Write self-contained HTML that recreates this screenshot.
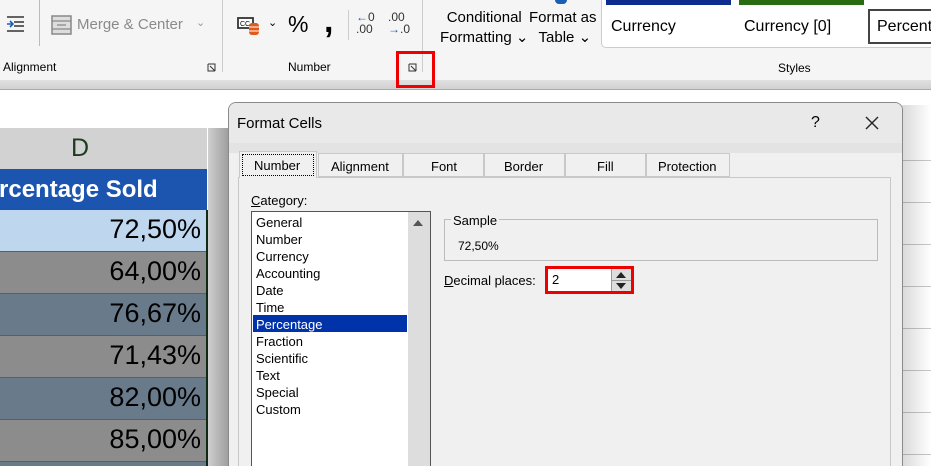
<!DOCTYPE html>
<html><head><style>
*{margin:0;padding:0;box-sizing:border-box}
html,body{width:931px;height:466px;overflow:hidden}
body{position:relative;background:#fff;font-family:"Liberation Sans",sans-serif;font-size:13px;color:#000}
.a{position:absolute}
.t{position:absolute;white-space:nowrap}
</style></head><body>
<!-- ribbon -->
<div class="a" style="left:0;top:0;width:931px;height:81px;background:#f5f5f5"></div>
<div class="a" style="left:0;top:80px;width:931px;height:10px;background:linear-gradient(#e0e0e0,#cfcfcf)"></div>
<div class="a" style="left:0;top:89px;width:931px;height:1px;background:#aaa"></div>
<div class="a" style="left:39px;top:0;width:1px;height:46px;background:#bbb"></div>
<div class="a" style="left:222px;top:0;width:1px;height:72px;background:#ccc"></div>
<div class="a" style="left:348px;top:10px;width:1px;height:30px;background:#ccc"></div>
<div class="a" style="left:422px;top:0;width:1px;height:72px;background:#ccc"></div>
<svg class="a" style="left:6px;top:15px" width="20" height="20"><path d="M1 2h17M8 7h10M8 11h10M1 16h17" stroke="#333" stroke-width="1.5"/><path d="M1 9h5M4 6l3 3-3 3" stroke="#1a5fb4" stroke-width="1.6" fill="none"/></svg>
<svg class="a" style="left:51px;top:15px" width="21" height="20"><rect x="1" y="1" width="19" height="18" fill="#ddd" stroke="#888" stroke-width="1.5"/><path d="M1 6h19M1 14h19M6 10h9" stroke="#888" stroke-width="1.3"/></svg>
<div class="t" style="left:77px;top:16px;font-size:15px;color:#8a8a8a">Merge &amp; Center</div>
<div class="t" style="left:196px;top:16px;font-size:11px;color:#999">&#8964;</div>
<svg class="a" style="left:237px;top:15px" width="24" height="22"><rect x="1" y="3" width="15" height="10" fill="#fff" stroke="#333" stroke-width="1.8"/><text x="3" y="11" font-size="7" font-family="Liberation Sans">CC</text><rect x="12" y="8" width="10" height="12" rx="3" fill="#e05a1a"/><path d="M12 12h10M12 16h10" stroke="#fff"/></svg>
<div class="t" style="left:268px;top:16px;font-size:11px">&#8964;</div>
<div class="t" style="left:288px;top:11px;font-size:23px">%</div>
<div class="t" style="left:324px;top:2px;font-size:34px;font-weight:bold">,</div>
<div class="t" style="left:356px;top:11px;font-size:12px;line-height:12px;color:#1a5fb4">&#8592;<span style="color:#333">0</span><br><span style="color:#333">.00</span></div>
<div class="t" style="left:388px;top:11px;font-size:12px;line-height:12px;color:#333">.00<br><span style="color:#1a5fb4">&#8594;</span>.0</div>
<div class="t" style="left:3px;top:60px;font-size:12px">Alignment</div>
<div class="t" style="left:288px;top:60px;font-size:12px">Number</div>
<div class="t" style="left:778px;top:61px;font-size:12px">Styles</div>
<svg class="a" style="left:207px;top:63px" width="10" height="10"><path d="M1 1h7v7M1 1v7h7M3 3l5 5" stroke="#333" fill="none"/></svg>
<svg class="a" style="left:408px;top:63px" width="10" height="10"><path d="M1 1h7v7M1 1v7h7M3 3l5 5" stroke="#333" fill="none"/></svg>
<div class="a" style="left:396px;top:51px;width:39px;height:37px;border:3px solid #e00"></div>
<div class="t" style="left:440px;top:8px;font-size:15px;text-align:center;line-height:20px">Conditional<br>Formatting &#8964;</div>
<div class="t" style="left:529px;top:8px;font-size:15px;text-align:center;line-height:20px">Format as<br>&nbsp;Table &#8964;</div>
<div class="a" style="left:555px;top:0;width:12px;height:4px;border-radius:0 0 6px 6px;background:#1a5fb4"></div>
<div class="a" style="left:601px;top:-5px;width:340px;height:53px;border:1px solid #ccc;border-radius:5px;background:#fff"></div>
<div class="a" style="left:606px;top:0;width:125px;height:5px;background:#0e2d8f"></div>
<div class="a" style="left:739px;top:0;width:125px;height:5px;background:#2a6c12"></div>
<div class="t" style="left:611px;top:18px;font-size:16px">Currency</div>
<div class="t" style="left:744px;top:18px;font-size:16px">Currency [0]</div>
<div class="a" style="left:868px;top:9px;width:70px;height:35px;border:2px solid #444;background:#fff"></div>
<div class="t" style="left:877px;top:18px;font-size:16px">Percent</div>
<!-- sheet -->
<div class="a" style="left:0;top:128px;width:207px;height:42px;background:#d2d2d2"></div>
<div class="t" style="left:71px;top:134px;font-size:25px;color:#1c3d1c">D</div>
<div class="a" style="left:0;top:169px;width:207px;height:41px;background:#1b55b0"></div>
<div class="t" style="left:-1px;top:176px;font-size:24px;font-weight:bold;color:#fff">rcentage Sold</div>
<div class="a" style="left:0;top:210px;width:207px;height:42px;background:#bed7ef;border-bottom:1px solid #55606a"></div>
<div class="a" style="left:0;top:252px;width:207px;height:42px;background:#8c8c8c;border-bottom:1px solid #55606a"></div>
<div class="a" style="left:0;top:294px;width:207px;height:42px;background:#697a8b;border-bottom:1px solid #55606a"></div>
<div class="a" style="left:0;top:336px;width:207px;height:42px;background:#8c8c8c;border-bottom:1px solid #55606a"></div>
<div class="a" style="left:0;top:378px;width:207px;height:42px;background:#697a8b;border-bottom:1px solid #55606a"></div>
<div class="a" style="left:0;top:420px;width:207px;height:42px;background:#8c8c8c;border-bottom:1px solid #55606a"></div>
<div class="a" style="left:0;top:462px;width:207px;height:4px;background:#697a8b"></div>
<div class="a" style="left:206px;top:210px;width:2px;height:256px;background:#0f2a14"></div>
<div class="t" style="right:730px;top:214px;font-size:27px">72,50%</div>
<div class="t" style="right:730px;top:256px;font-size:27px">64,00%</div>
<div class="t" style="right:730px;top:298px;font-size:27px">76,67%</div>
<div class="t" style="right:730px;top:340px;font-size:27px">71,43%</div>
<div class="t" style="right:730px;top:382px;font-size:27px">82,00%</div>
<div class="t" style="right:730px;top:424px;font-size:27px">85,00%</div>
<div class="a" style="left:208px;top:128px;width:22px;height:338px;background:linear-gradient(90deg,#cfcfcf,#9a9a9a)"></div>
<div class="a" style="left:902px;top:119px;width:29px;height:347px;background:repeating-linear-gradient(#fff 0 41px,#c8c8c8 41px 42px);"></div>
<div class="a" style="left:902px;top:105px;width:29px;height:361px;background:linear-gradient(90deg,rgba(0,0,0,.15),rgba(0,0,0,0))"></div>
<!-- dialog -->
<div class="a" style="left:228px;top:102px;width:675px;height:364px;background:#f0f0f0;border:1px solid #8a8a8a;border-bottom:none;border-radius:8px 8px 0 0;overflow:hidden">
<div class="a" style="left:0;top:0;width:675px;height:40px;background:#e9e9e9"></div>
<div class="a" style="left:0;top:40px;width:675px;height:10px;background:#e3e3e3"></div>
<div class="t" style="left:8px;top:12px;font-size:15px">Format Cells</div>
<div class="t" style="left:582px;top:11px;font-size:16px">?</div>
<svg class="a" style="left:636px;top:13px" width="14" height="14"><path d="M1 1l12 12M13 1L1 13" stroke="#222" stroke-width="1.4"/></svg>
</div>
<div class="a" style="left:238px;top:177px;width:653px;height:289px;background:#f0f0f0;border:1px solid #c8c8c8;border-bottom:none"></div>
<div class="a" style="left:239px;top:151px;width:78px;height:27px;background:#f0f0f0;border:1px solid #c8c8c8;border-bottom:none"></div>
<div class="a" style="left:242px;top:154px;width:72px;height:22px;border:1px dotted #000"></div>
<div class="t" style="left:254px;top:158px">Number</div>
<div class="a" style="left:318px;top:153px;width:85px;height:24px;background:#f0f0f0;border:1px solid #c8c8c8"></div>
<div class="t" style="left:331px;top:159px">Alignment</div>
<div class="a" style="left:403px;top:153px;width:81px;height:24px;background:#f0f0f0;border:1px solid #c8c8c8"></div>
<div class="t" style="left:431px;top:159px">Font</div>
<div class="a" style="left:484px;top:153px;width:81px;height:24px;background:#f0f0f0;border:1px solid #c8c8c8"></div>
<div class="t" style="left:504px;top:159px">Border</div>
<div class="a" style="left:565px;top:153px;width:81px;height:24px;background:#f0f0f0;border:1px solid #c8c8c8"></div>
<div class="t" style="left:597px;top:159px">Fill</div>
<div class="a" style="left:646px;top:153px;width:84px;height:24px;background:#f0f0f0;border:1px solid #c8c8c8"></div>
<div class="t" style="left:658px;top:159px">Protection</div>
<div class="t" style="left:251px;top:193px"><u>C</u>ategory:</div>
<div class="a" style="left:251px;top:211px;width:180px;height:255px;background:#fff;border:1px solid #555;border-bottom:none"></div>
<div class="a" style="left:408px;top:212px;width:22px;height:254px;background:#ddd"></div>
<svg class="a" style="left:412px;top:219px" width="12" height="8"><path d="M1 7L6 1l5 6z" fill="#555"/></svg>
<div class="a" style="left:253px;top:315px;width:154px;height:17px;background:#0033aa"></div>
<div class="t" style="left:256px;top:214px;line-height:17px">General<br>Number<br>Currency<br>Accounting<br>Date<br>Time<br><span style="color:#fff">Percentage</span><br>Fraction<br>Scientific<br>Text<br>Special<br>Custom</div>
<div class="a" style="left:444px;top:219px;width:434px;height:42px;border:1px solid #bbb"></div>
<div class="t" style="left:451px;top:213px;background:#f0f0f0;padding:0 2px">Sample</div>
<div class="t" style="left:458px;top:239px;font-size:12px">72,50%</div>
<div class="t" style="left:444px;top:273px"><u>D</u>ecimal places:</div>
<div class="a" style="left:545px;top:266px;width:89px;height:28px;border:3px solid #e00;background:#fff"></div>
<div class="t" style="left:552px;top:272px">2</div>
<div class="a" style="left:611px;top:269px;width:20px;height:22px;background:#ddd;border-left:1px solid #999"></div>
<div class="a" style="left:612px;top:280px;width:19px;height:1px;background:#999"></div>
<svg class="a" style="left:616px;top:272px" width="10" height="6"><path d="M0 6L5 0l5 6z" fill="#222"/></svg>
<svg class="a" style="left:616px;top:283px" width="10" height="6"><path d="M0 0L5 6l5-6z" fill="#222"/></svg>
</body></html>
